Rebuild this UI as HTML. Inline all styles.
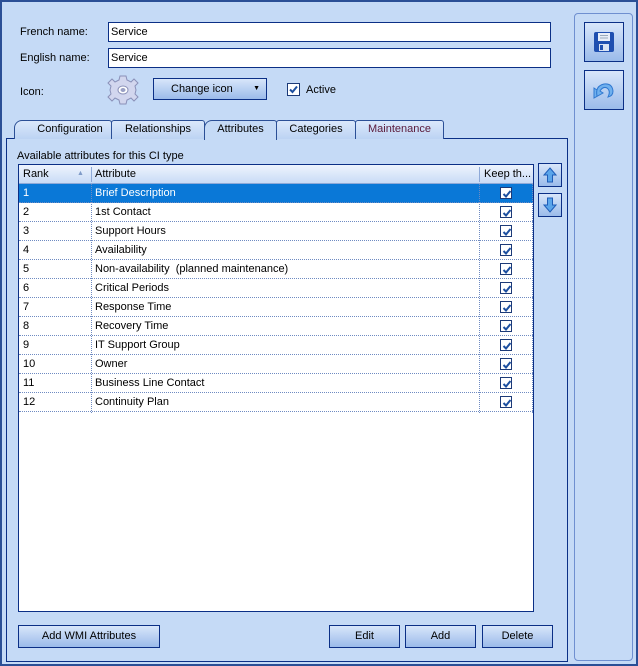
<!DOCTYPE html>
<html><head><style>
*{box-sizing:border-box;margin:0;padding:0}
body{width:638px;height:666px;background:#c5daf6;font-family:"Liberation Sans",sans-serif;font-size:11px;color:#000;position:relative;overflow:hidden}
.a{position:absolute}
.frame{left:0;top:0;width:638px;height:666px;border:2px solid #2b4f96}
.lbl{font-size:11px}
.inp{background:#fff;border:1px solid #0b2f86;height:20px;padding:3px 2px;font-size:11px}
.btn{background:linear-gradient(#d8e6fa,#9bbbea);border:1px solid #0b2f86;text-align:center;font-size:11px;line-height:20px}
.tab{top:120px;height:19px;border:1px solid #2b4f96;border-bottom:none;background:linear-gradient(#dbe8fb,#bcd3f3);text-align:center;line-height:17px;font-size:11px;border-radius:3px 3px 0 0}
.grid{left:18px;top:164px;width:516px;height:448px;background:#fff;border:1px solid #0b2f86}
.row{position:absolute;left:0;width:514px;height:19px;border-bottom:1px dotted #6f8bc2;line-height:18px}
.row span{position:absolute}
.c1{left:4px}.c2{left:76px}
.vd{position:absolute;top:19px;width:0;height:229px;border-left:1px dotted #6f8bc2}
.cb{position:absolute;left:481px;top:3px;width:12px;height:12px;border:1px solid #1c3a78;background:#fff}
.cb svg{position:absolute;left:1px;top:1px}
</style></head><body>
<div class="a frame"></div>
<div class="a" style="left:574px;top:13px;width:59px;height:648px;border:1px solid #6f8fd0;border-radius:4px"></div>
<div class="a btn" style="left:584px;top:22px;width:40px;height:40px"><svg width="24" height="24" viewBox="0 0 24 24" style="margin-top:7px"><rect x="2" y="2" width="20" height="20" rx="2" fill="#1f4fb0"/><rect x="6" y="3" width="12" height="8" fill="#e8eef8"/><line x1="8" y1="5.5" x2="16" y2="5.5" stroke="#9ab"/><line x1="8" y1="8" x2="16" y2="8" stroke="#9ab"/><rect x="7" y="14" width="10" height="7" fill="#d9e3f3"/><rect x="8" y="15" width="3" height="5" fill="#1f4fb0"/></svg></div>
<div class="a btn" style="left:584px;top:70px;width:40px;height:40px"><svg width="26" height="24" viewBox="0 0 26 24" style="margin-top:7px"><path d="M6 18 Q4 8 13 6 Q21 5 22 13 Q22 18 17 19 Q20 13 16 10 Q12 8 9 13 L12 15 L3 20 L3 10 L6 12" fill="#6fb0ee" stroke="#2f78d0" stroke-width="1"/></svg></div>
<div class="a lbl" style="left:20px;top:26px">French name:</div>
<div class="a inp" style="left:108px;top:22px;width:443px">Service</div>
<div class="a lbl" style="left:20px;top:52px">English name:</div>
<div class="a inp" style="left:108px;top:48px;width:443px">Service</div>
<div class="a lbl" style="left:20px;top:86px">Icon:</div>
<svg class="a" style="left:107px;top:75px" width="32" height="30" viewBox="0 0 32 30"><g transform="translate(16,15)"><g fill="#d2d6ee" stroke="#8a90b8" stroke-width="1"><path d="M-3,-14 L3,-14 L4,-10 L8,-8 L11,-11 L15,-7 L12,-4 L13,0 L12,4 L15,7 L11,11 L8,8 L4,10 L3,14 L-3,14 L-4,10 L-8,8 L-11,11 L-15,7 L-12,4 L-13,0 L-12,-4 L-15,-7 L-11,-11 L-8,-8 L-4,-10 Z"/></g><ellipse rx="5" ry="4" fill="#fff" stroke="#8a90b8"/><ellipse rx="2.5" ry="2" fill="#9aa0c5"/></g></svg>
<div class="a btn" style="left:153px;top:78px;width:114px;height:22px;text-align:left;padding-left:17px">Change icon<span style="position:absolute;right:6px;top:0;font-size:7px">▼</span></div>
<div class="a" style="left:287px;top:83px;width:13px;height:13px;border:1px solid #1c3a78;background:#fff"><svg width="11" height="11" style="position:absolute;left:0;top:0"><path d="M2 5.5 L4.5 8 L9 2.5" stroke="#1c4fa0" stroke-width="2" fill="none"/></svg></div>
<div class="a lbl" style="left:306px;top:84px">Active</div>
<div class="a" style="left:6px;top:138px;width:562px;height:524px;border:1px solid #0b2f86"></div>
<div class="a tab" style="left:14px;width:98px;border-radius:8px 3px 0 0;padding-left:14px">Configuration</div>
<div class="a tab" style="left:111px;width:94px">Relationships</div>
<div class="a tab" style="left:204px;width:73px;background:#c5daf6;height:20px;border-radius:8px 3px 0 0">Attributes</div>
<div class="a tab" style="left:276px;width:80px">Categories</div>
<div class="a tab" style="left:355px;width:89px;color:#5a1a3a">Maintenance</div>
<div class="a lbl" style="left:17px;top:150px">Available attributes for this CI type</div>
<div class="a grid">
<div class="row" style="top:0;background:linear-gradient(#eef4fd,#c9dbf6);border-bottom:1px solid #8ea9d8"><span class="c1">Rank</span><span style="left:58px;color:#7f9bc8;font-size:7px">▲</span><span style="left:72px;top:2px;height:15px;border-left:1px solid #8ea9d8"></span><span class="c2">Attribute</span><span style="left:460px;top:2px;height:15px;border-left:1px solid #8ea9d8"></span><span style="left:465px">Keep th...</span></div>
<div class="row" style="top:19px;background:#0a78d7;color:#fff"><span class="c1">1</span><span class="c2">Brief Description</span></div>
<div class="row" style="top:38px"><span class="c1">2</span><span class="c2">1st Contact</span></div>
<div class="row" style="top:57px"><span class="c1">3</span><span class="c2">Support Hours</span></div>
<div class="row" style="top:76px"><span class="c1">4</span><span class="c2">Availability</span></div>
<div class="row" style="top:95px"><span class="c1">5</span><span class="c2">Non-availability&nbsp; (planned maintenance)</span></div>
<div class="row" style="top:114px"><span class="c1">6</span><span class="c2">Critical Periods</span></div>
<div class="row" style="top:133px"><span class="c1">7</span><span class="c2">Response Time</span></div>
<div class="row" style="top:152px"><span class="c1">8</span><span class="c2">Recovery Time</span></div>
<div class="row" style="top:171px"><span class="c1">9</span><span class="c2">IT Support Group</span></div>
<div class="row" style="top:190px"><span class="c1">10</span><span class="c2">Owner</span></div>
<div class="row" style="top:209px"><span class="c1">11</span><span class="c2">Business Line Contact</span></div>
<div class="row" style="top:228px"><span class="c1">12</span><span class="c2">Continuity Plan</span></div>
<div class="vd" style="left:72px"></div>
<div class="vd" style="left:460px"></div>
<div class="vd" style="left:513px"></div>
<div id="cbs"></div>
</div>
<script>
var g=document.getElementById('cbs'),h='';
for(var i=0;i<12;i++){h+='<div class="cb" style="top:'+(19+i*19+3)+'px"><svg width="10" height="10"><path d="M1.5 5 L4 7.5 L8.5 2" stroke="#1c4fa0" stroke-width="2" fill="none"/></svg></div>';}
g.innerHTML=h;
</script>
<div class="a btn" style="left:538px;top:163px;width:24px;height:24px;line-height:22px"><svg width="14" height="16" viewBox="0 0 14 16" style="margin-top:3px"><path d="M7 1 L13 8 L9.5 8 L9.5 15 L4.5 15 L4.5 8 L1 8 Z" fill="#5aa5ea" stroke="#1f5db8"/></svg></div>
<div class="a btn" style="left:538px;top:193px;width:24px;height:24px"><svg width="14" height="16" viewBox="0 0 14 16" style="margin-top:3px"><path d="M7 15 L13 8 L9.5 8 L9.5 1 L4.5 1 L4.5 8 L1 8 Z" fill="#5aa5ea" stroke="#1f5db8"/></svg></div>
<div class="a btn" style="left:18px;top:625px;width:142px;height:23px;line-height:21px">Add WMI Attributes</div>
<div class="a btn" style="left:329px;top:625px;width:71px;height:23px;line-height:21px">Edit</div>
<div class="a btn" style="left:405px;top:625px;width:71px;height:23px;line-height:21px">Add</div>
<div class="a btn" style="left:482px;top:625px;width:71px;height:23px;line-height:21px">Delete</div>
</body></html>
